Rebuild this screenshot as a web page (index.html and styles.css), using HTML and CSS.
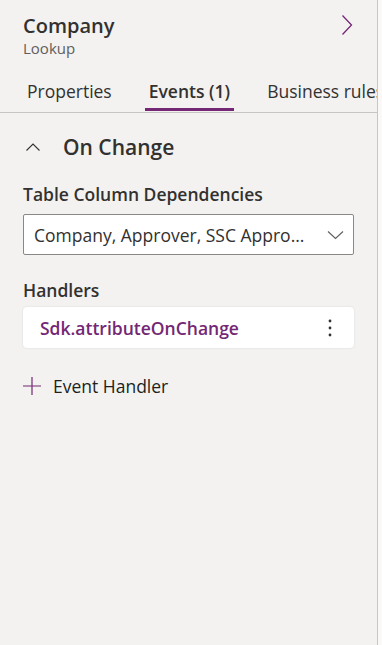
FILE: index.html
```html
<!DOCTYPE html>
<html lang="en">
<head>
    <meta charset="UTF-8">
    <meta name="viewport" content="width=device-width, initial-scale=1.0">
    <title>Company - Events</title>
    <link rel="stylesheet" href="styles.css">
</head>
<body>
    <div class="panel">
        <div class="header">
            <div>
                <h1 class="title">Company</h1>
                <div class="subtitle">Lookup</div>
            </div>
            <svg class="next" width="12" height="22" viewBox="0 0 12 22"><path d="M1.5 1.5 L10.5 11 L1.5 20.5" fill="none" stroke="#742774" stroke-width="1.3"/></svg>
        </div>

        <div class="tabs">
            <div class="tab">Properties</div>
            <div class="tab active">Events (1)</div>
            <div class="tab">Business rules</div>
        </div>

        <div class="section">
            <div class="section-head">
                <svg width="16" height="10" viewBox="0 0 16 10"><path d="M1.5 8.5 L8 2 L14.5 8.5" fill="none" stroke="#323130" stroke-width="1.1"/></svg>
                <span>On Change</span>
            </div>

            <div class="label">Table Column Dependencies</div>
            <div class="dropdown">
                <span class="dropdown-text">Company, Approver, SSC Appro...</span>
                <svg width="17" height="10" viewBox="0 0 17 10"><path d="M1 1.5 L8.5 8.5 L16 1.5" fill="none" stroke="#605e5c" stroke-width="1.1"/></svg>
            </div>

            <div class="label">Handlers</div>
            <div class="handler">
                <span class="handler-name">Sdk.attributeOnChange</span>
                <svg class="more" width="4" height="18" viewBox="0 0 4 18"><circle cx="2" cy="2" r="1.4" fill="#323130"/><circle cx="2" cy="9" r="1.4" fill="#323130"/><circle cx="2" cy="16" r="1.4" fill="#323130"/></svg>
            </div>

            <div class="add">
                <svg width="18" height="18" viewBox="0 0 18 18"><path d="M9 0 V18 M0 9 H18" fill="none" stroke="#742774" stroke-width="1.2"/></svg>
                <span>Event Handler</span>
            </div>
        </div>
    </div>
</body>
</html>
```

FILE: styles.css
```css
html, body {
    margin: 0;
    height: 100%;
}
body {
    font-family: "Open Sans", "Noto Sans", sans-serif;
    background-color: #faf9f8;
    color: #323130;
}
.panel {
    width: 378px;
    height: 100%;
    box-sizing: border-box;
    background-color: #f3f2f1;
    border-right: 1px solid #c8c6c4;
    overflow: hidden;
}
.header {
    display: flex;
    justify-content: space-between;
    align-items: flex-start;
    padding: 12px 24px 0 23px;
}
.title {
    margin: 0;
    font-size: 20px;
    font-weight: 600;
    line-height: 28px;
}
.subtitle {
    font-size: 15px;
    color: #605e5c;
    line-height: 16px;
}
.next {
    margin-top: 2px;
}
.tabs {
    display: flex;
    gap: 37px;
    white-space: nowrap;
    margin-top: 24px;
    padding-left: 27px;
    border-bottom: 1px solid #c8c6c4;
}
.tab {
    font-size: 17.5px;
    line-height: 22px;
    padding-bottom: 6px;
    border-bottom: 3px solid transparent;
    margin-bottom: 1px;
}
.tab.active {
    font-weight: 600;
    border-bottom-color: #742774;
    padding: 0 4px 6px;
    margin-left: -4px;
    margin-right: -4px;
}
.section {
    padding: 20px 23px 0;
}
.section-head {
    display: flex;
    align-items: center;
    gap: 22px;
    padding-left: 2px;
    font-size: 21px;
    font-weight: 600;
    line-height: 28px;
}
.label {
    font-size: 17.5px;
    font-weight: 600;
    line-height: 22px;
    margin-top: 22px;
}
.dropdown {
    display: flex;
    align-items: center;
    justify-content: space-between;
    height: 41px;
    box-sizing: border-box;
    margin-top: 9px;
    margin-bottom: 24px;
    padding: 0 9px 0 10px;
    background: white;
    border: 1px solid #8a8886;
    border-radius: 2px;
    font-size: 17.5px;
}
.handler {
    display: flex;
    align-items: center;
    justify-content: space-between;
    height: 41px;
    margin-top: 6px;
    padding: 0 22px 0 17px;
    background: white;
    border-radius: 4px;
    box-shadow: 0 0 2px rgba(0,0,0,0.12);
}
.handler-name {
    color: #742774;
    font-size: 17.5px;
    font-weight: 600;
}
.add {
    display: flex;
    align-items: center;
    gap: 12px;
    margin-top: 26px;
    font-size: 17.5px;
    color: #201f1e;
}
```
